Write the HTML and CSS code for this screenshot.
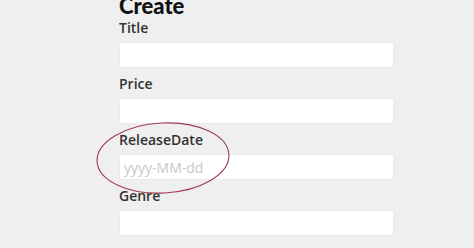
FILE: index.html
```html
<!DOCTYPE html>
<html>
<head>
<meta charset="utf-8">
<link rel="stylesheet" href="styles.css">
</head>
<body>
<div class="page">
  <h2 class="title">Create</h2>
  <form class="form">
    <div class="group">
      <label class="label">Title</label>
      <input class="input" type="text">
    </div>
    <div class="group">
      <label class="label">Price</label>
      <input class="input" type="text">
    </div>
    <div class="group">
      <label class="label">ReleaseDate</label>
      <input class="input" type="text" placeholder="yyyy-MM-dd">
    </div>
    <div class="group">
      <label class="label">Genre</label>
      <input class="input" type="text">
    </div>
  </form>
  <svg class="circle" width="140" height="76" viewBox="0 0 140 76">
    <ellipse cx="69" cy="37" rx="66" ry="35" fill="none" stroke="#a03c4e" stroke-width="1.1" transform="rotate(-3 69 37)"/>
  </svg>
</div>
</body>
</html>
```
FILE: styles.css
```css
html, body {
  margin: 0;
  padding: 0;
  background: #efefef;
}
.page {
  position: relative;
  width: 474px;
  height: 248px;
  overflow: hidden;
  padding-left: 119px;
  box-sizing: border-box;
  font-family: "Open Sans", Lato, sans-serif;
}
.title {
  margin: -6px 0 0 0;
  font-family: Lato, sans-serif;
  font-size: 22px;
  line-height: 24px;
  font-weight: 900;
  color: #111;
}
.form {
  margin: 0;
}
.group {
  display: flex;
  flex-direction: column;
  margin-bottom: 4px;
}
.label {
  display: block;
  font-size: 14px;
  line-height: 20px;
  font-weight: 600;
  color: #333;
  margin-bottom: 4px;
}
.input {
  width: 275px;
  height: 26px;
  box-sizing: border-box;
  border: 1px solid #eaeaea;
  background: #fff;
  margin: 0 0 2px 0;
  padding: 0 4px;
  font-family: "Open Sans", sans-serif;
  font-size: 14px;
  outline: none;
}
.input::placeholder {
  color: #c9c9c9;
}
.circle {
  position: absolute;
  left: 94px;
  top: 121px;
}
```
